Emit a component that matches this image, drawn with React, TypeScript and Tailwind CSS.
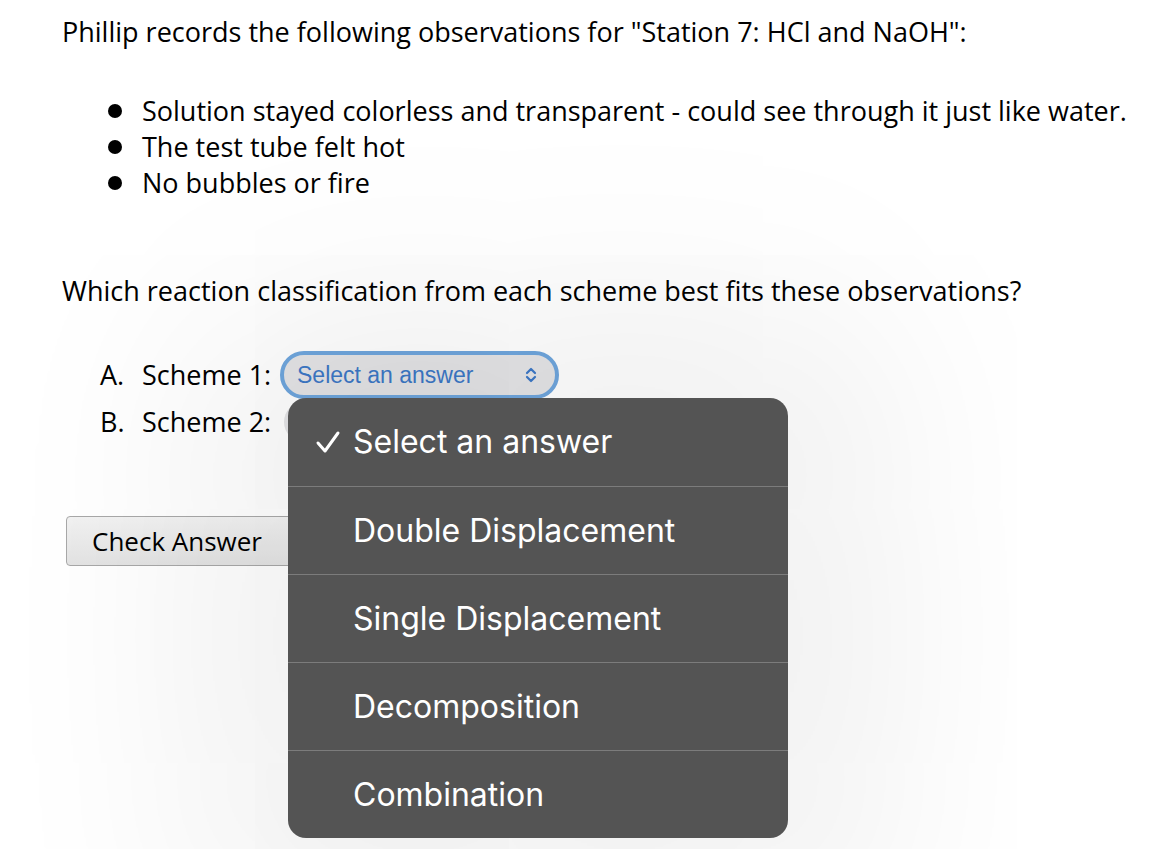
import { useState } from "react";

const OPTIONS = [
  "Select an answer",
  "Double Displacement",
  "Single Displacement",
  "Decomposition",
  "Combination",
];

const OBSERVATIONS = [
  "Solution stayed colorless and transparent - could see through it just like water.",
  "The test tube felt hot",
  "No bubbles or fire",
];

function Chevrons() {
  return (
    <svg width="14" height="16" viewBox="0 0 14 16" fill="none" stroke="currentColor" strokeWidth="2.2" strokeLinecap="round" strokeLinejoin="round">
      <path d="M3 6l4-4 4 4" />
      <path d="M3 10l4 4 4-4" />
    </svg>
  );
}

function Check() {
  return (
    <svg width="26" height="24" viewBox="0 0 26 24" fill="none" stroke="white" strokeWidth="3" strokeLinecap="round" strokeLinejoin="round">
      <path d="M3 13l7 8L23 3" />
    </svg>
  );
}

function Picker({ open }: { open: boolean }) {
  return (
    <div className="relative">
      <div className="rounded-full border-[4px] border-[#6fa6dd] bg-[#e4e4e6] h-[48px] w-[279px] flex items-center justify-between pl-[13px] pr-[17px] text-[#3c78c6] font-['Liberation_Sans',sans-serif] text-[23px]">
        <span>Select an answer</span>
        <Chevrons />
      </div>
      {open && (
        <div className="absolute left-[8px] top-[47px] z-10 w-[500px] rounded-[18px] bg-[#545454] shadow-[0_0_220px_90px_rgba(0,0,0,0.07)] overflow-hidden font-['Inter',sans-serif] text-white text-[32px]">
          {OPTIONS.map((o, i) => (
            <div
              key={o}
              className={`h-[88px] flex items-center ${i > 0 ? "border-t border-[#7c7c7c]" : ""}`}
            >
              <span className="w-[65px] flex justify-end pr-[12px]">{i === 0 && <Check />}</span>
              <span>{o}</span>
            </div>
          ))}
        </div>
      )}
    </div>
  );
}

export default function App() {
  const [open] = useState(true);

  return (
    <div className="min-h-[849px] bg-white text-black font-['Open_Sans',sans-serif] text-[27px] leading-[36px] pl-[62px] pt-[14px]">
      <p>Phillip records the following observations for "Station 7: HCl and NaOH":</p>
      <ul className="mt-[43px] pl-[46px] list-none">
        {OBSERVATIONS.map((o) => (
          <li key={o} className="flex items-center gap-[20px]">
            <span className="w-[14px] h-[14px] rounded-full bg-black shrink-0" />
            <span className="whitespace-nowrap">{o}</span>
          </li>
        ))}
      </ul>
      <p className="mt-[72px]">Which reaction classification from each scheme best fits these observations?</p>

      <div className="mt-[42px] pl-[38px] flex flex-col">
        <div className="flex items-center">
          <span className="w-[42px]">A.</span>
          <span className="w-[138px]">Scheme 1:</span>
          <Picker open={open} />
        </div>
        <div className="flex items-center mt-[3px]">
          <span className="w-[42px]">B.</span>
          <span className="w-[138px]">Scheme 2:</span>
          <div className="rounded-full bg-[#e4e4e6] h-[40px] w-[279px] ml-[4px]" />
        </div>
      </div>

      <button className="mt-[74px] ml-[4px] h-[50px] w-[240px] rounded-[4px] border border-[#a8a8a8] bg-gradient-to-b from-[#f2f2f2] to-[#e3e3e3] text-left pl-[25px] text-[26px]">
        Check Answer
      </button>
    </div>
  );
}
